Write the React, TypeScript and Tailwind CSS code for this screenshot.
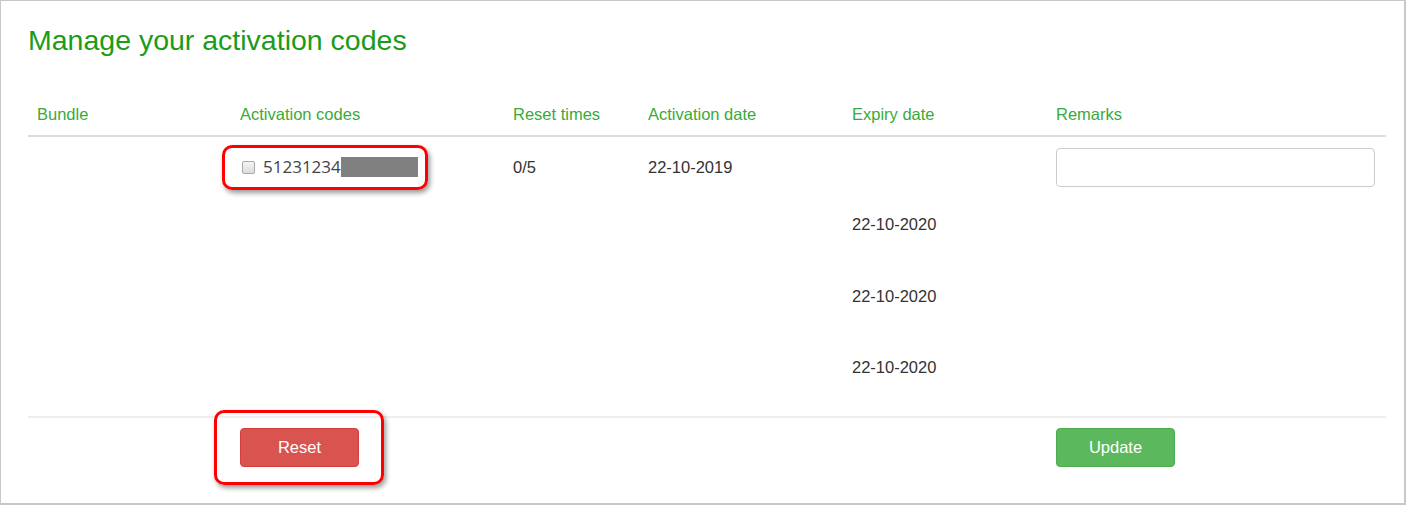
import React from 'react';

const cols = 'grid grid-cols-[203px_273px_135px_204px_204px_339px]';

const Highlight: React.FC<{ className: string }> = ({ className }) => (
  <span
    className={`pointer-events-none absolute rounded-[10px] border-[3px] border-[#ff0000] shadow-[2px_3px_5px_rgba(0,0,0,0.4)] ${className}`}
  />
);

export default function App() {
  const headers = ['Bundle', 'Activation codes', 'Reset times', 'Activation date', 'Expiry date', 'Remarks'];
  const expiry = ['22-10-2020', '22-10-2020', '22-10-2020'];

  return (
    <div className="h-[505px] w-[1406px] bg-white font-['Liberation_Sans',Arial,sans-serif] text-[16.5px] text-[#333]">
      <div className="h-full w-full border-t border-l border-r-2 border-b-2 border-[#c8c8c8] pl-[27px] pt-[24px]">
        <h1 className="mb-[36px] text-[28.5px] leading-[31px] text-[#1a9c1a]">Manage your activation codes</h1>

        <div className="w-[1358px]">
          {/* header */}
          <div className={`${cols} border-b-2 border-[#dddddd]`}>
            {headers.map((h) => (
              <div key={h} className="pt-[11px] pb-[9px] pl-[9px] leading-[23px] text-[#3aaa3a]">
                {h}
              </div>
            ))}
          </div>

          {/* body */}
          <div className={`${cols} border-b-2 border-[#eeeeee] pt-[10px] pb-[29px]`}>
            <div />
            <div className="pl-[11px]">
              <div className="relative inline-flex h-[40px] items-center">
                <span className="mr-[8px] inline-block h-[13px] w-[13px] rounded-[2px] border border-[#a9a9a9] bg-gradient-to-b from-[#f4f4f4] to-[#dcdcdc]" />
                <span className="font-['Open_Sans',sans-serif] text-[17px] leading-[20px] text-[#444]">51231234</span>
                <span className="inline-block h-[20px] w-[77px] bg-[#808080]" />
                <Highlight className="-top-[2px] -bottom-[3px] -left-[20px] -right-[10px]" />
              </div>
            </div>
            <div className="pl-[9px] leading-[40px]">0/5</div>
            <div className="pl-[9px] leading-[40px]">22-10-2019</div>
            <div className="flex flex-col gap-[31.5px] pl-[9px] pt-[57px]">
              {expiry.map((d, i) => (
                <div key={i} className="leading-[40px]">
                  {d}
                </div>
              ))}
            </div>
            <div className="pl-[9px]">
              <input
                type="text"
                className="mt-[1px] h-[39px] w-[319px] rounded-[4px] border border-[#cccccc] px-3 outline-none"
              />
            </div>
          </div>

          {/* footer */}
          <div className={`${cols} pt-[10px]`}>
            <div />
            <div className="pl-[9px]">
              <div className="relative inline-block">
                <button className="h-[39px] w-[119px] rounded-[4px] border border-[#d43f3a] bg-[#d9534f] text-[16.5px] text-white">
                  Reset
                </button>
                <Highlight className="-top-[18px] -bottom-[18px] -left-[26px] -right-[25px]" />
              </div>
            </div>
            <div />
            <div />
            <div />
            <div className="pl-[9px]">
              <button className="h-[39px] w-[119px] rounded-[4px] border border-[#4cae4c] bg-[#5cb85c] text-[16.5px] text-white">
                Update
              </button>
            </div>
          </div>
        </div>
      </div>
    </div>
  );
}
